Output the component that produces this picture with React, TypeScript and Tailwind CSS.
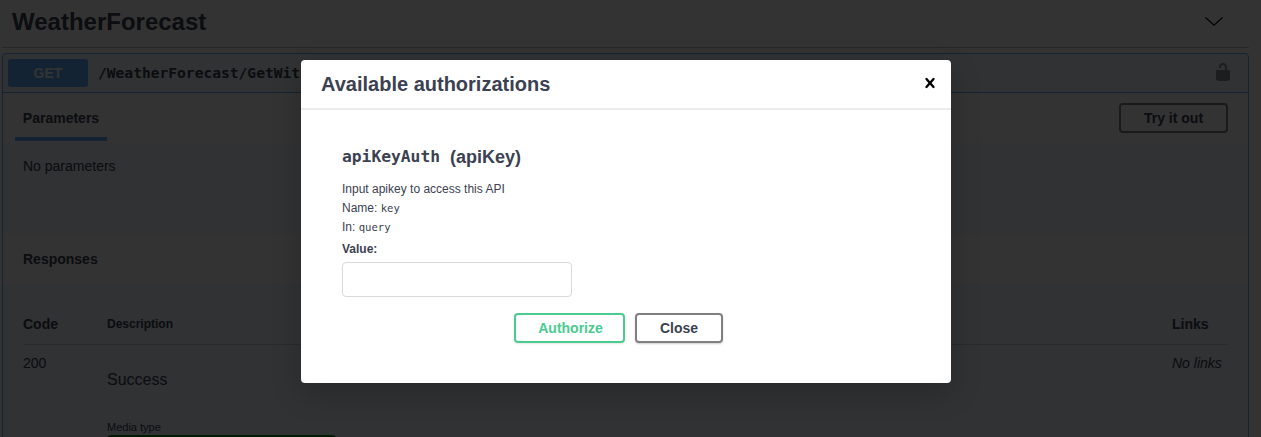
import React from "react";

const sans = "font-['Liberation_Sans',Arial,sans-serif]";
const mono = "font-['DejaVu_Sans_Mono','Liberation_Mono',monospace]";

function AuthModal() {
  return (
    <div className="absolute inset-0 z-20 bg-black/80">
      <div className="absolute left-[301px] top-[60px] h-[323px] w-[650px] rounded-[4px] bg-white shadow-[0_10px_30px_0_rgba(0,0,0,0.2)]">
        <div className="flex h-[50px] items-center justify-between border-b-2 border-[#ebebeb] pl-[20px] pr-[11px]">
          <h3 className="text-[20px] font-bold leading-[48px] text-[#3b4151]">Available authorizations</h3>
          <svg width="20" height="20" viewBox="0 0 20 20" className="mt-[-2px]">
            <path
              d="M14.348 14.849a1.2 1.2 0 0 1-1.697 0L10 11.819l-2.651 3.029a1.2 1.2 0 1 1-1.697-1.697l2.758-3.15-2.759-3.152a1.2 1.2 0 1 1 1.697-1.697L10 8.183l2.651-3.031a1.2 1.2 0 1 1 1.697 1.697l-2.758 3.152 2.758 3.15a1.2 1.2 0 0 1 0 1.698z"
              fill="#000"
            />
          </svg>
        </div>
        <div className="px-[41px] pt-[35px]">
          <h4 className="flex h-[24px] items-center gap-[10px] text-[18px] font-bold text-[#3b4151]">
            <code className={`${mono} text-[16.3px] font-semibold`}>apiKeyAuth</code>
            <span>(apiKey)</span>
          </h4>
          <p className="mt-[11px] h-[19px] text-[12px] leading-[19px] text-[#3b4151]">Input apikey to access this API</p>
          <p className="mt-[-1px] h-[20px] text-[12px] leading-[20px] text-[#3b4151]">
            Name: <code className={`${mono} text-[10.6px]`}>key</code>
          </p>
          <p className="h-[19px] text-[12px] leading-[19px] text-[#3b4151]">
            In: <code className={`${mono} text-[10.6px]`}>query</code>
          </p>
          <label className="mt-[3px] block h-[18px] text-[12px] font-bold leading-[18px] text-[#3b4151]">Value:</label>
          <input className="mt-[4px] block h-[35px] w-[230px] rounded-[4px] border border-[#d9d9d9] bg-white" />
          <div className="mt-[16px] flex justify-end gap-[10px] pr-[187px]">
            <button className="h-[30px] w-[111px] rounded-[4px] border-2 border-[#49cc90] pl-[2px] text-[14px] font-bold text-[#49cc90] shadow-[0_1px_2px_rgba(0,0,0,0.1)]">
              Authorize
            </button>
            <button className="h-[30px] w-[88px] rounded-[4px] border-2 border-[#808080] text-[14px] font-bold text-[#3b4151] shadow-[0_1px_2px_rgba(0,0,0,0.2)]">
              Close
            </button>
          </div>
        </div>
      </div>
    </div>
  );
}

export default function App() {
  return (
    <div className={`${sans} relative h-[437px] w-[1261px] overflow-hidden bg-white text-[#3b4151]`}>
      <div className="w-[1249px]">
        <div className="ml-[2px] flex h-[48px] items-center justify-between border-b border-[#3b4151]/30 pl-[10px] pr-[26px]">
          <h3 className="mt-[-4px] text-[24px] font-bold">WeatherForecast</h3>
          <svg width="18" height="9" viewBox="0 0 18 9" className="mt-[-4px]" fill="none">
            <path d="M0.5 0.5L9 8.2L17.5 0.5" stroke="#000" strokeWidth="1.1" />
          </svg>
        </div>
        <div className="ml-[2px] mt-[5px] h-[500px] rounded-[4px] border border-[#61affe] bg-[#61affe]/10">
          <div className="flex h-[39px] items-center border-b border-[#61affe] pl-[5px] pr-[15px]">
            <span className="h-[28px] w-[80px] rounded-[3px] bg-[#61affe] text-center text-[14px] font-bold leading-[28px] text-white">
              GET
            </span>
            <span className={`${mono} ml-[10px] text-[14.6px] font-semibold`}>/WeatherForecast/GetWithApiKey</span>
            <svg width="20" height="20" viewBox="0 0 20 20" className="ml-auto mt-[-3px] opacity-40">
              <path
                d="M15.8 8H14V5.6C14 2.703 12.665 1 10 1 7.334 1 6 2.703 6 5.6V6h2v-.801C8 3.754 8.797 3 10 3c1.203 0 2 .754 2 2.199V8H4c-.553 0-1 .646-1 1.199V17c0 .549.428 1.139.951 1.307l1.197.387C5.672 18.861 6.55 19 7.1 19h5.8c.549 0 1.428-.139 1.951-.307l1.196-.387c.524-.167.953-.757.953-1.306V9.199C17 8.646 16.352 8 15.8 8z"
                fill="#000"
              />
            </svg>
          </div>
          <div className="flex h-[50px] items-start justify-between bg-white/80 pl-[12px] pr-[20px]">
            <div className="h-[48px] w-[92px] border-b-4 border-[#61affe] pt-[16px] text-center text-[14px] font-bold leading-[18px]">
              Parameters
            </div>
            <button className="mt-[10px] h-[30px] w-[109px] rounded-[4px] border-2 border-[#808080] text-[14px] font-bold">Try it out</button>
          </div>
          <div className="h-[91px] pl-[20px] pt-[14px] text-[14px] leading-[18px]">No parameters</div>
          <div className="flex h-[50px] items-center bg-white/80 pl-[20px] text-[14px] font-bold">Responses</div>
          <div className="px-[20px] pt-[31px]">
            <div className="flex h-[30px] items-start border-b border-[#3b4151]/20 font-bold leading-[18px]">
              <span className="w-[84px] text-[14px]">Code</span>
              <span className="mt-[1px] flex-1 text-[12px] leading-[17px]">Description</span>
              <span className="w-[56px] text-[14px]">Links</span>
            </div>
            <div className="flex pt-[9px]">
              <span className="w-[84px] text-[14px] leading-[18px]">200</span>
              <div className="flex-1">
                <p className="mt-[16px] text-[16px] leading-[20px]">Success</p>
                <p className="mt-[30px] text-[11px] leading-[14px]">Media type</p>
                <div className="mt-[1px] h-[30px] w-[229px] rounded-[4px] border-2 border-[#008000] bg-[#008000]" />
              </div>
              <span className="w-[56px] whitespace-nowrap text-[14px] italic leading-[18px]">No links</span>
            </div>
          </div>
        </div>
      </div>
      <AuthModal />
    </div>
  );
}
